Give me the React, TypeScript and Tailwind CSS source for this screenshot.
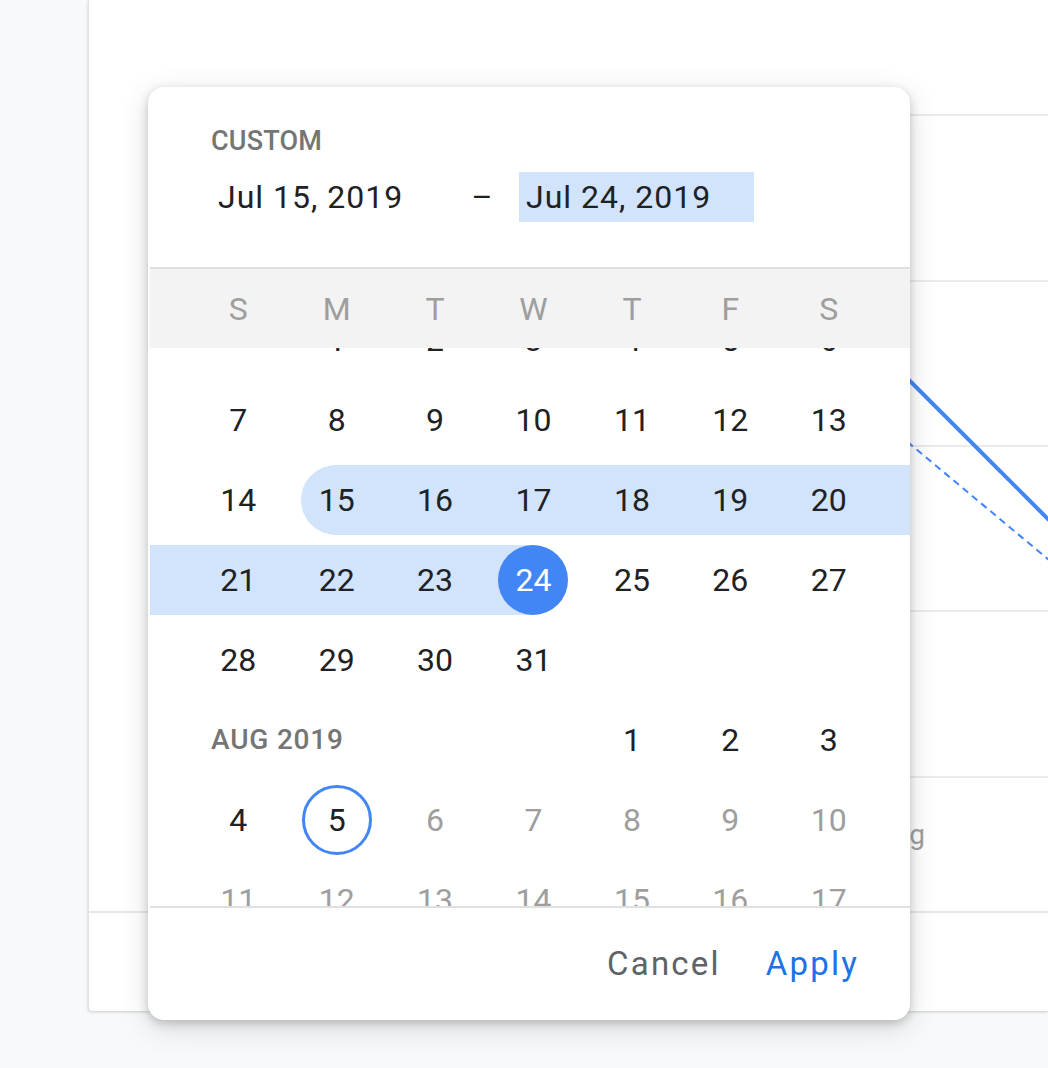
import React from 'react';

type Cell = {
  n: number;
  muted?: boolean;
  inRange?: boolean;
  start?: boolean;
  end?: boolean;
  today?: boolean;
} | null;

const font = { fontFamily: 'Roboto, "Noto Sans", Arial, sans-serif' };

const WEEKDAYS = ['S', 'M', 'T', 'W', 'T', 'F', 'S'];

const inRange = (n: number) => n >= 15 && n <= 24;

const julCell = (n: number): Cell => ({
  n,
  inRange: inRange(n),
  start: n === 15,
  end: n === 24,
});

const julRows: Cell[][] = [
  [null, 1, 2, 3, 4, 5, 6],
  [7, 8, 9, 10, 11, 12, 13],
  [14, 15, 16, 17, 18, 19, 20],
  [21, 22, 23, 24, 25, 26, 27],
  [28, 29, 30, 31, null, null, null],
].map((r) => r.map((n) => (n === null ? null : julCell(n as number))));

const augRows: Cell[][] = [
  [4, 5, 6, 7, 8, 9, 10].map((n) => ({ n, muted: n > 5, today: n === 5 })),
  [11, 12, 13, 14, 15, 16, 17].map((n) => ({ n, muted: true })),
];

function DayCell({ cell }: { cell: Cell }) {
  if (!cell) return <div className="h-[80px]" />;
  const band = cell.inRange && !cell.start && !cell.end;
  return (
    <div className="h-[80px] grid items-center">
      {cell.inRange && (
        <div
          className={
            '[grid-area:1/1] h-[70px] bg-[#d2e3fc] ' +
            (cell.start ? 'ml-[14px] rounded-l-full' : cell.end ? 'w-1/2' : band ? 'w-full' : '')
          }
        />
      )}
      {cell.end && (
        <div className="[grid-area:1/1] justify-self-center h-[70px] w-[70px] rounded-full bg-[#4285f4]" />
      )}
      {cell.today && (
        <div className="[grid-area:1/1] justify-self-center h-[70px] w-[70px] rounded-full border-[3px] border-[#4285f4]" />
      )}
      <span
        className={
          '[grid-area:1/1] justify-self-center text-[32px] leading-none ' +
          (cell.end ? 'text-white' : cell.muted ? 'text-[#9e9e9e]' : 'text-[#202124]')
        }
      >
        {cell.n}
      </span>
    </div>
  );
}

function WeekRow({ cells }: { cells: Cell[] }) {
  const first = cells[0];
  const last = cells[6];
  const padLeft = first && first.inRange && !first.start;
  const padRight = last && last.inRange && !last.end;
  return (
    <div className="flex items-center h-[80px]">
      <div className="w-[39px] h-[70px] flex">
        {padLeft && <div className="w-full h-full bg-[#d2e3fc]" />}
      </div>
      <div className="w-[689px] grid grid-cols-7">
        {cells.map((c, i) => (
          <DayCell key={i} cell={c} />
        ))}
      </div>
      <div className="w-[32px] h-[70px] flex">
        {padRight && <div className="w-full h-full bg-[#d2e3fc]" />}
      </div>
    </div>
  );
}

function BackgroundCard() {
  return (
    <div className="ml-[88px] w-[960px] h-[1011px] bg-white border-l border-[#e3e3e3] rounded-bl-[4px] shadow-[0_1px_3px_rgba(60,64,67,0.25)] flex flex-col">
      <div className="relative h-[911px] pt-[114px] flex flex-col">
        <div className="ml-[300px] h-[166px] border-t-2 border-[#ebebeb]" />
        <div className="ml-[300px] h-[165px] border-t-2 border-[#ebebeb]" />
        <div className="ml-[300px] h-[165px] border-t-2 border-[#ebebeb]" />
        <div className="ml-[300px] h-[166px] border-t-2 border-[#ebebeb]" />
        <div className="ml-[300px] border-t-2 border-[#ebebeb]" />
        <div className="w-[836px] flex justify-end pt-[40px]">
          <span className="text-[28px] leading-[34px] text-[#9e9e9e]">ing</span>
        </div>
        <svg className="absolute inset-0" width="960" height="911" viewBox="0 0 960 911">
          <line x1="780" y1="340" x2="960" y2="520" stroke="#4285f4" strokeWidth="4" />
          <line
            x1="800"
            y1="426.5"
            x2="960"
            y2="560"
            stroke="#4285f4"
            strokeWidth="2"
            strokeDasharray="7 5"
          />
        </svg>
      </div>
      <div className="flex-1 border-t-2 border-[#e8e8e8]" />
    </div>
  );
}

export default function App() {
  return (
    <div className="relative w-[1048px] h-[1068px] overflow-hidden bg-[#f8f9fa]" style={font}>
      <BackgroundCard />

      {/* date range popup */}
      <div className="absolute left-[148px] top-[87px] w-[762px] h-[933px] bg-white rounded-[16px] overflow-hidden flex flex-col shadow-[0_3px_8px_rgba(60,64,67,0.25),0_8px_28px_rgba(60,64,67,0.18)]">
        <div className="h-[182px] ml-[2px] border-b-2 border-[#e0e0e0] pt-[38px] pl-[61px]">
          <div className="text-[27px] leading-[32px] font-medium text-[#757575] tracking-[0.2px]">CUSTOM</div>
          <div className="mt-[15px] flex items-center h-[50px] text-[32px] text-[#202124] tracking-[1px]">
            <div className="w-[235px] h-[50px] leading-[50px] px-[7px]">Jul 15, 2019</div>
            <div className="w-[73px] text-center leading-[50px]">–</div>
            <div className="w-[235px] h-[50px] leading-[50px] px-[7px] bg-[#d2e3fc]">Jul 24, 2019</div>
          </div>
        </div>

        <div className="ml-[2px] h-[79px] bg-[#f3f3f3] flex items-center">
          <div className="w-[39px]" />
          <div className="w-[689px] grid grid-cols-7">
            {WEEKDAYS.map((d, i) => (
              <div key={i} className="text-center text-[32px] leading-none text-[#9e9e9e]">
                {d}
              </div>
            ))}
          </div>
        </div>

        <div className="ml-[2px] h-[558px] overflow-hidden">
          <div className="-mt-[48px]">
            {julRows.map((r, i) => (
              <WeekRow key={'j' + i} cells={r} />
            ))}
            <div className="flex items-center h-[80px]">
              <div className="w-[39px]" />
              <div className="w-[689px] grid grid-cols-7 items-center">
                <div className="col-span-4 pl-[22px] text-[28px] font-medium text-[#757575] tracking-[0.8px]">AUG 2019</div>
                {[1, 2, 3].map((n) => (
                  <DayCell key={n} cell={{ n }} />
                ))}
              </div>
            </div>
            {augRows.map((r, i) => (
              <WeekRow key={'a' + i} cells={r} />
            ))}
          </div>
        </div>

        <div className="h-[114px] ml-[2px] border-t-2 border-[#e0e0e0] flex items-center justify-end gap-[45px] pr-[51px] text-[33px] tracking-[2.2px]">
          <button className="text-[#5f6368]">Cancel</button>
          <button className="text-[#1a73e8]">Apply</button>
        </div>
      </div>
    </div>
  );
}
